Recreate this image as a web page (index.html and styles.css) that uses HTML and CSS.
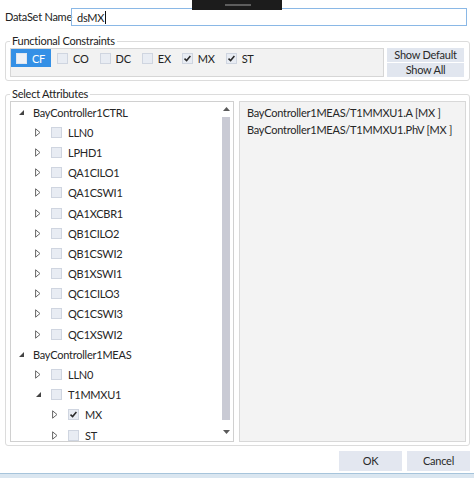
FILE: index.html
```html
<!DOCTYPE html>
<html>
<head>
<meta charset="utf-8">
<link rel="stylesheet" href="styles.css">
</head>
<body>
<div class="window">
  <div class="grip"><span class="grip-line"></span></div>
  <div class="main">
    <div class="name-row">
      <label class="name-label">DataSet Name</label>
      <div class="name-input">dsMX<span class="caret"></span></div>
    </div>

    <fieldset class="group fc-group">
      <legend>Functional Constraints</legend>
      <div class="fc-body">
        <div class="fc-list">
          <div class="fc-item selected"><span class="chk"></span>CF</div>
          <div class="fc-item"><span class="chk"></span>CO</div>
          <div class="fc-item"><span class="chk"></span>DC</div>
          <div class="fc-item"><span class="chk"></span>EX</div>
          <div class="fc-item"><span class="chk"><svg viewBox="0 0 11 11" class="tick"><path d="M2.5 5.6 L4.6 7.6 L8.4 3"/></svg></span>MX</div>
          <div class="fc-item"><span class="chk"><svg viewBox="0 0 11 11" class="tick"><path d="M2.5 5.6 L4.6 7.6 L8.4 3"/></svg></span>ST</div>
        </div>
        <div class="fc-buttons">
          <button class="btn small">Show Default</button>
          <button class="btn small">Show All</button>
        </div>
      </div>
    </fieldset>

    <fieldset class="group attr-group">
      <legend>Select Attributes</legend>
      <div class="attr-body">
        <div class="tree">
          <div class="tree-rows">
            <div class="row l0"><span class="exp"><svg class="ic-open" viewBox="0 0 5 5"><path d="M5 0 L5 5 L0 5 Z"/></svg></span><span class="txt root">BayController1CTRL</span></div>
            <div class="row l1"><span class="exp"><svg class="ic-closed" viewBox="0 0 6 9"><path d="M0.6 0.8 L5 4.5 L0.6 8.2 Z"/></svg></span><span class="chk"></span><span class="txt">LLN0</span></div>
            <div class="row l1"><span class="exp"><svg class="ic-closed" viewBox="0 0 6 9"><path d="M0.6 0.8 L5 4.5 L0.6 8.2 Z"/></svg></span><span class="chk"></span><span class="txt">LPHD1</span></div>
            <div class="row l1"><span class="exp"><svg class="ic-closed" viewBox="0 0 6 9"><path d="M0.6 0.8 L5 4.5 L0.6 8.2 Z"/></svg></span><span class="chk"></span><span class="txt">QA1CILO1</span></div>
            <div class="row l1"><span class="exp"><svg class="ic-closed" viewBox="0 0 6 9"><path d="M0.6 0.8 L5 4.5 L0.6 8.2 Z"/></svg></span><span class="chk"></span><span class="txt">QA1CSWI1</span></div>
            <div class="row l1"><span class="exp"><svg class="ic-closed" viewBox="0 0 6 9"><path d="M0.6 0.8 L5 4.5 L0.6 8.2 Z"/></svg></span><span class="chk"></span><span class="txt">QA1XCBR1</span></div>
            <div class="row l1"><span class="exp"><svg class="ic-closed" viewBox="0 0 6 9"><path d="M0.6 0.8 L5 4.5 L0.6 8.2 Z"/></svg></span><span class="chk"></span><span class="txt">QB1CILO2</span></div>
            <div class="row l1"><span class="exp"><svg class="ic-closed" viewBox="0 0 6 9"><path d="M0.6 0.8 L5 4.5 L0.6 8.2 Z"/></svg></span><span class="chk"></span><span class="txt">QB1CSWI2</span></div>
            <div class="row l1"><span class="exp"><svg class="ic-closed" viewBox="0 0 6 9"><path d="M0.6 0.8 L5 4.5 L0.6 8.2 Z"/></svg></span><span class="chk"></span><span class="txt">QB1XSWI1</span></div>
            <div class="row l1"><span class="exp"><svg class="ic-closed" viewBox="0 0 6 9"><path d="M0.6 0.8 L5 4.5 L0.6 8.2 Z"/></svg></span><span class="chk"></span><span class="txt">QC1CILO3</span></div>
            <div class="row l1"><span class="exp"><svg class="ic-closed" viewBox="0 0 6 9"><path d="M0.6 0.8 L5 4.5 L0.6 8.2 Z"/></svg></span><span class="chk"></span><span class="txt">QC1CSWI3</span></div>
            <div class="row l1"><span class="exp"><svg class="ic-closed" viewBox="0 0 6 9"><path d="M0.6 0.8 L5 4.5 L0.6 8.2 Z"/></svg></span><span class="chk"></span><span class="txt">QC1XSWI2</span></div>
            <div class="row l0"><span class="exp"><svg class="ic-open" viewBox="0 0 5 5"><path d="M5 0 L5 5 L0 5 Z"/></svg></span><span class="txt root">BayController1MEAS</span></div>
            <div class="row l1"><span class="exp"><svg class="ic-closed" viewBox="0 0 6 9"><path d="M0.6 0.8 L5 4.5 L0.6 8.2 Z"/></svg></span><span class="chk"></span><span class="txt">LLN0</span></div>
            <div class="row l1"><span class="exp"><svg class="ic-open shift" viewBox="0 0 5 5"><path d="M5 0 L5 5 L0 5 Z"/></svg></span><span class="chk"></span><span class="txt">T1MMXU1</span></div>
            <div class="row l2"><span class="exp"><svg class="ic-closed" viewBox="0 0 6 9"><path d="M0.6 0.8 L5 4.5 L0.6 8.2 Z"/></svg></span><span class="chk"><svg viewBox="0 0 11 11" class="tick"><path d="M2.5 5.6 L4.6 7.6 L8.4 3"/></svg></span><span class="txt">MX</span></div>
            <div class="row l2"><span class="exp"><svg class="ic-closed" viewBox="0 0 6 9"><path d="M0.6 0.8 L5 4.5 L0.6 8.2 Z"/></svg></span><span class="chk"></span><span class="txt">ST</span></div>
          </div>
          <div class="scrollbar">
            <div class="sb-btn"><svg viewBox="0 0 7 4" class="sb-arrow"><path d="M3.5 0 L7 4 L0 4 Z"/></svg></div>
            <div class="sb-thumb"></div>
            <div class="sb-btn down"><svg viewBox="0 0 7 4" class="sb-arrow"><path d="M0 0 L7 0 L3.5 4 Z"/></svg></div>
          </div>
        </div>
        <div class="selected-list">
          <div class="sel-item">BayController1MEAS/T1MMXU1.A [MX ]</div>
          <div class="sel-item">BayController1MEAS/T1MMXU1.PhV [MX ]</div>
        </div>
      </div>
    </fieldset>

    <div class="footer">
      <button class="btn big">OK</button>
      <button class="btn big">Cancel</button>
    </div>
  </div>
  <div class="statusbar"></div>
</div>
</body>
</html>
```
FILE: styles.css
```css
* { box-sizing: border-box; }

html, body {
  margin: 0;
  padding: 0;
  background: #ffffff;
}

body {
  font-family: Lato, "Liberation Sans", "DejaVu Sans", sans-serif;
  font-size: 11px;
  letter-spacing: -0.25px;
  color: #222222;
}

.window {
  position: relative;
  width: 474px;
  height: 478px;
  overflow: hidden;
  display: flex;
  flex-direction: column;
  background: #ffffff;
}

.grip {
  position: absolute;
  top: 0;
  left: 192px;
  width: 90px;
  height: 10px;
  background: #1c1c1c;
  display: flex;
  align-items: center;
  justify-content: center;
  z-index: 5;
}

.grip-line {
  width: 26px;
  height: 2px;
  background: #5d5d5d;
  margin-left: 2px;
}

.main {
  padding: 8px 4px 0 5px;
  display: flex;
  flex-direction: column;
}

/* name row */
.name-row {
  display: flex;
  align-items: center;
  height: 18px;
  margin-bottom: 8px;
}

.name-label {
  width: 66px;
  flex: none;
  line-height: 18px;
  white-space: nowrap;
}

.name-input {
  flex: 1;
  height: 18px;
  margin-right: 3px;
  border: 1px solid #8ab8e6;
  padding-left: 5px;
  display: flex;
  align-items: center;
  color: #1a1a1a;
}

.caret {
  display: inline-block;
  width: 1px;
  height: 13px;
  background: #111111;
  margin-left: 1px;
}

/* group boxes */
.group {
  margin: 0;
  min-width: 0;
  border: 1px solid #dcdcdc;
  border-radius: 3px;
}

.group legend {
  padding: 0 2px;
  margin: 0;
  line-height: 14px;
  height: 14px;
  color: #222222;
  white-space: nowrap;
}

.fc-group {
  padding: 0 5px 3px 4px;
}

.fc-body {
  display: flex;
  gap: 3px;
  height: 29px;
}

.fc-list {
  flex: 1;
  border: 1px solid #d6d6d6;
  background: #f2f2f2;
  display: flex;
  align-items: flex-start;
}

.fc-item {
  display: flex;
  align-items: center;
  height: 18px;
  padding: 0 5px;
  margin-right: 1px;
  color: #222222;
  white-space: nowrap;
}

.fc-item.selected {
  background: #3490e6;
  color: #ffffff;
  padding-right: 6px;
}

.fc-item.selected .chk {
  background: #eef2f8;
  border-color: #dfe6f0;
}

.chk {
  width: 11px;
  height: 11px;
  flex: none;
  border: 1px solid #cfd5e0;
  background: #e8ecf3;
  margin-right: 5px;
  display: flex;
  align-items: center;
  justify-content: center;
}

.tick {
  width: 11px;
  height: 11px;
  flex: none;
}

.tick path {
  fill: none;
  stroke: #2a2a2a;
  stroke-width: 1.5;
}

.fc-buttons {
  width: 77px;
  display: flex;
  flex-direction: column;
  gap: 1px;
}

.btn {
  font-family: inherit;
  font-size: 11px;
  letter-spacing: -0.25px;
  color: #2a2a2a;
  background: #e1e6ef;
  border: 1px solid #e1e6ef;
  padding: 0;
  margin: 0;
  cursor: default;
}

.btn.small {
  height: 14px;
  line-height: 12px;
}

.btn.big {
  width: 63px;
  height: 20px;
  line-height: 18px;
  background: #e3e7f0;
  border-color: #e3e7f0;
}

/* attributes group */
.attr-group {
  margin-top: 6px;
  padding: 0 3px 3px 4px;
}

.attr-body {
  display: flex;
  gap: 5px;
  height: 341px;
}

.tree {
  width: 224px;
  flex: none;
  border: 1px solid #d0d0d0;
  background: #ffffff;
  display: flex;
  overflow: hidden;
}

.tree-rows {
  flex: 1;
  overflow: hidden;
}

.row {
  display: flex;
  align-items: center;
  height: 20.2px;
  white-space: nowrap;
  color: #262626;
}

.row.l0 { padding-left: 8px; }
.row.l1 { padding-left: 24px; }
.row.l2 { padding-left: 41px; }

.exp {
  width: 16px;
  flex: none;
  display: flex;
  align-items: center;
}

.row.l0 .exp { width: 14px; }

.ic-open {
  width: 5px;
  height: 5px;
}

.ic-open.shift { margin-left: 1px; }

.ic-open path { fill: #444444; }

.ic-closed {
  width: 6px;
  height: 9px;
}

.ic-closed path {
  fill: none;
  stroke: #666666;
  stroke-width: 1;
}

.row .chk { margin-right: 6px; }

.scrollbar {
  width: 16px;
  flex: none;
  display: flex;
  flex-direction: column;
  background: #ffffff;
}

.sb-btn {
  height: 14px;
  display: flex;
  align-items: center;
  justify-content: center;
  padding-left: 2px;
}

.sb-btn.down {
  height: 18px;
  margin-top: 3px;
}

.sb-arrow {
  width: 7px;
  height: 4px;
}

.sb-arrow path { fill: #5a5a5a; }

.sb-thumb {
  flex: 1;
  margin: 1px 3px 0 5px;
  background: #c9cad4;
}

.selected-list {
  flex: 1;
  border: 1px solid #d8d8d8;
  background: #f3f3f3;
  padding: 2px 0 0 7px;
}

.sel-item {
  line-height: 17px;
  white-space: nowrap;
  color: #262626;
}

/* footer */
.footer {
  display: flex;
  justify-content: flex-end;
  gap: 5px;
  height: 27px;
  padding-top: 5px;
}

.statusbar {
  flex: 1;
  border-top: 1px solid #a6c4db;
  background: #dae6f0;
}
```
